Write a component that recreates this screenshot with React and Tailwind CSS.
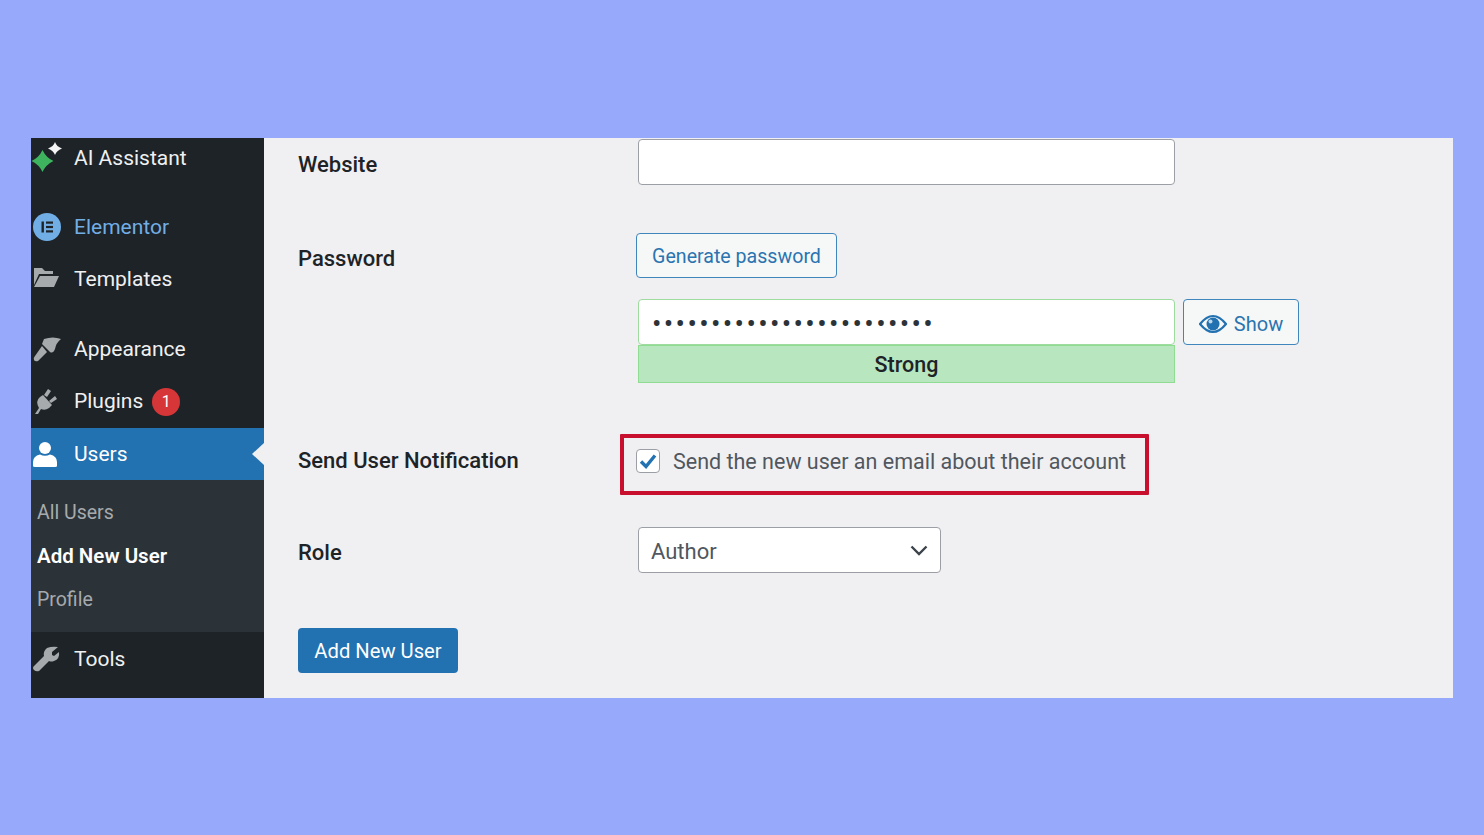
import React from 'react';

const Sparkle = () => (
  <svg width="34" height="36" viewBox="0 0 34 36" className="-ml-[2px] shrink-0">
    <path d="M12.5 10 Q16 17.5 23.5 21 Q16 24.5 12.5 32 Q9 24.5 1.5 21 Q9 17.5 12.5 10Z" fill="#3fb45f" />
    <path d="M25 2 Q26.5 6.5 32 8.5 Q26.5 10.5 25 15 Q23.5 10.5 18 8.5 Q23.5 6.5 25 2Z" fill="#f4f4f4" />
  </svg>
);

const ElementorIcon = () => (
  <svg width="30" height="30" viewBox="0 0 30 30">
    <circle cx="15" cy="15" r="14" fill="#72aee6" />
    <rect x="9.5" y="9.5" width="2.4" height="11" fill="#1d2327" />
    <rect x="14" y="9.5" width="7" height="2.2" fill="#1d2327" />
    <rect x="14" y="13.9" width="7" height="2.2" fill="#1d2327" />
    <rect x="14" y="18.3" width="7" height="2.2" fill="#1d2327" />
  </svg>
);

const FolderIcon = () => (
  <svg width="28" height="24" viewBox="0 0 28 24" className="-mt-[3px]">
    <path d="M2 2h8l3 3h8v3H7L2 19V2Z" fill="#a7aaad" />
    <path d="M8 10h19l-5 11H2l6-11Z" fill="#a7aaad" />
  </svg>
);

const BrushIcon = () => (
  <svg width="30" height="27" viewBox="0 0 30 27">
    <path d="M12 3 Q21 0 29 3 Q24 7 23 13 Q21 18 18 16 L10 8Z" fill="#a7aaad" />
    <path d="M10 10 L15 16 L6 25 Q3 26 2 24 Q1 22 3 20Z" fill="#a7aaad" />
  </svg>
);

const PlugIcon = () => (
  <svg width="28" height="28" viewBox="0 0 26 28" className="-ml-[1px]">
    <path d="M3 27 L7 21 Q3 14 8 10 L11 8 L20 18 L17 21 Q13 24 9 22 L6 27Z" fill="#a7aaad" />
    <path d="M12 8 L16 2 L19 4 L15 10Z M17 14 L23 9 L25 12 L19 16Z" fill="#a7aaad" />
  </svg>
);

const UserIcon = () => (
  <svg width="26" height="27" viewBox="0 0 26 27">
    <circle cx="13" cy="7" r="6" fill="#fff" />
    <path d="M1 21 Q1 15 8 13.5 Q13 16 18 13.5 Q25 15 25 21 V25 Q25 26 23 26 H3 Q1 26 1 25Z" fill="#fff" />
  </svg>
);

const WrenchIcon = () => (
  <svg width="28" height="26" viewBox="0 0 28 26">
    <path d="M26 1 L20 6 V9 L22 10 L27 6 Q28 13 22 15 Q19 16 17 15 L7 25 Q4 26 2 24 Q0 22 2 20 L12 10 Q11 5 15 2 Q20 0 26 1Z" fill="#a7aaad" />
  </svg>
);

const EyeIcon = () => (
  <svg width="28" height="20" viewBox="0 0 28 20">
    <path d="M1 10 Q14 -6 27 10 Q14 26 1 10Z" fill="none" stroke="#2271b1" strokeWidth="2.2" />
    <circle cx="14" cy="10" r="6.5" fill="#2271b1" />
    <circle cx="11.5" cy="7.5" r="2" fill="#bcd6ea" />
  </svg>
);

function MenuItem({ icon, label, color = 'text-[#f0f0f1]', active, badge }) {
  return (
    <div className={`relative flex h-[52px] items-center ${active ? 'bg-[#2271b1]' : ''}`}>
      <div className="flex w-[43px] shrink-0 justify-start pl-px">{icon}</div>
      <span className={`mt-[2px] text-[21px] ${color}`}>{label}</span>
      {badge && (
        <span className="ml-[9px] mt-[2px] flex h-[28px] w-[28px] items-center justify-center rounded-full bg-[#d63638] text-[16px] text-white">
          {badge}
        </span>
      )}
      {active && (
        <span className="absolute right-0 top-[15px] h-0 w-0 border-y-[11px] border-r-[12px] border-y-transparent border-r-[#f0f0f1]" />
      )}
    </div>
  );
}

export default function App() {
  return (
    <div
      className="h-[835px] bg-[#96a9fb] px-[31px] pt-[138px] text-[22px]"
      style={{ fontFamily: 'Roboto, "Noto Sans", sans-serif' }}
    >
      <div className="flex h-[560px] overflow-hidden bg-[#f0f0f2]">
        <aside className="w-[233px] shrink-0 bg-[#1d2327]">
          <div className="-mt-[6px]">
            <MenuItem icon={<Sparkle />} label="AI Assistant" />
          </div>
          <div className="mt-[17px]">
            <MenuItem icon={<ElementorIcon />} label="Elementor" color="text-[#72aee6]" />
            <MenuItem icon={<FolderIcon />} label="Templates" />
          </div>
          <div className="mt-[18px]">
            <MenuItem icon={<BrushIcon />} label="Appearance" />
            <MenuItem icon={<PlugIcon />} label="Plugins" badge="1" />
            <div className="mt-px">
              <MenuItem icon={<UserIcon />} label="Users" color="text-white" active />
            </div>
          </div>
          <div className="h-[152px] bg-[#2c3338] pl-[6px] pt-[11px] text-[19.5px] text-[#a7aaad]">
            <div className="flex h-[43.5px] items-center">All Users</div>
            <div className="flex h-[43.5px] items-center text-[20.5px] font-semibold text-white">Add New User</div>
            <div className="flex h-[43.5px] items-center">Profile</div>
          </div>
          <div className="pt-px">
            <MenuItem icon={<WrenchIcon />} label="Tools" />
          </div>
        </aside>

        <main className="min-w-0 flex-1 pl-[34px] text-[#1d2327]">
          <div className="mt-[1px] flex h-[46px] items-center">
            <label className="w-[340px] shrink-0 pt-[4px] font-medium">Website</label>
            <div className="h-full w-[537px] rounded-[4px] border border-[#9ca0a6] bg-white" />
          </div>

          <div className="mt-[48px] flex">
            <label className="w-[340px] shrink-0 pt-[9px] font-medium">Password</label>
            <div>
              <button className="-ml-[2px] flex h-[45px] w-[201px] items-center justify-center rounded-[4px] border border-[#3f86bd] bg-[#f6f7f7] pt-[2px] text-[19.6px] text-[#2a74b0]">
                Generate password
              </button>
              <div className="mt-[21px] flex">
                <div className="w-[537px]">
                  <div className="flex h-[46px] items-center rounded-[4px] border border-[#9ddb9f] bg-white pl-[13px] pt-[3px] text-[28px] leading-none tracking-[2.35px] text-[#2c3338]">
                    ••••••••••••••••••••••••
                  </div>
                  <div className="flex h-[38px] items-center justify-center border border-[#8fdc92] bg-[#b8e6bf] pt-[2px] text-[21.5px] font-medium">
                    Strong
                  </div>
                </div>
                <button className="ml-[8px] flex h-[46px] w-[116px] items-center justify-center gap-[7px] rounded-[4px] border border-[#3f86bd] bg-[#f6f7f7] pt-[3px] text-[20px] text-[#2a74b0]">
                  <EyeIcon />
                  Show
                </button>
              </div>
            </div>
          </div>

          <div className="mt-[51px] flex">
            <label className="w-[322px] shrink-0 pt-[10px] font-medium">Send User Notification</label>
            <div className="flex h-[61px] w-[529px] items-start rounded-[1px] border-[4px] border-[#c8102e] pl-[12px] pt-[11px]">
              <span className="flex h-[24px] w-[24px] items-center justify-center rounded-[4px] border border-[#9ca0a6] bg-white">
                <svg width="18" height="16" viewBox="0 0 18 16">
                  <path d="M2 8.5 L7 13.5 L16 2.5" fill="none" stroke="#2271b1" strokeWidth="3.4" />
                </svg>
              </span>
              <span className="ml-[13px] mt-px whitespace-nowrap text-[21.5px] leading-[24px] text-[#50575e]">
                Send the new user an email about their account
              </span>
            </div>
          </div>

          <div className="mt-[32px] flex">
            <label className="w-[340px] shrink-0 pt-[9px] font-medium">Role</label>
            <div className="flex h-[46px] w-[303px] items-center justify-between rounded-[4px] border border-[#9ca0a6] bg-white pl-[12px] pr-[12px] pt-[2px] text-[#50575e]">
              Author
              <svg width="18" height="11" viewBox="0 0 18 11" className="-mt-[2px]">
                <path d="M1.5 1.5 L9 9 L16.5 1.5" fill="none" stroke="#3c434a" strokeWidth="2.4" />
              </svg>
            </div>
          </div>

          <button className="mt-[55px] flex h-[45px] w-[160px] items-center justify-center rounded-[4px] bg-[#2271b1] pt-[2px] text-[20.2px] text-white">
            Add New User
          </button>
        </main>
      </div>
    </div>
  );
}
